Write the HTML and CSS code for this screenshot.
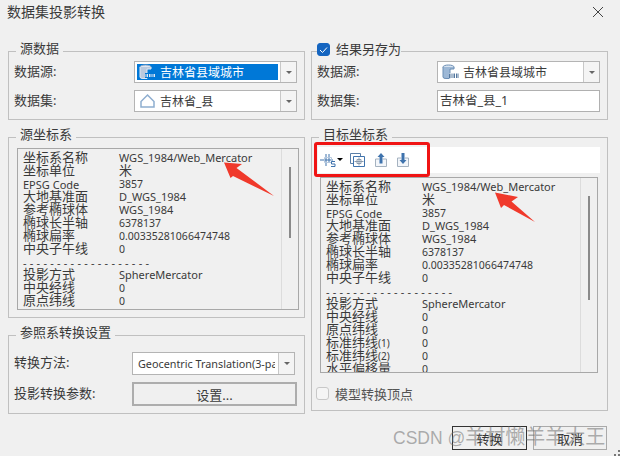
FILE: index.html
```html
<!DOCTYPE html>
<html lang="zh">
<head>
<meta charset="utf-8">
<title>数据集投影转换</title>
<link rel="stylesheet" href="styles.css">
</head>
<body>
<div class="dialog">
  <header class="titlebar">
    <span class="title">数据集投影转换</span>
    <svg class="close" width="12" height="12" viewBox="0 0 12 12"><path d="M1 1l10 10M11 1L1 11" stroke="#444" stroke-width="1" fill="none"/></svg>
  </header>

  <main class="columns">
    <section class="col">
      <fieldset class="group">
        <legend>源数据</legend>
        <div class="form-row">
          <label class="lbl">数据源:</label>
          <div class="combo">
            <div class="combo-value selected">
              <svg class="ico" width="17" height="16" viewBox="0 0 17 16"><ellipse cx="6.500" cy="3" rx="5.500" ry="2" fill="#dfe7f2" stroke="#8fa6c4"/><path d="M1 3v10q0 1.500 3 1.500h4V5h4V3" fill="#b9c9de" stroke="#dfe7f2"/><path d="M6 9h11v5H6z" fill="#0078d7"/><path d="M7 10v3M8.500 10v3M10.500 10v3M12 10v3M14 10v3M15.500 10v3" stroke="#dfe7f2"/></svg>
              <span>吉林省县域城市</span>
            </div>
            <div class="combo-btn"><i class="caret"></i></div>
          </div>
        </div>
        <div class="form-row">
          <label class="lbl">数据集:</label>
          <div class="combo">
            <div class="combo-value">
              <svg class="ico" width="17" height="16" viewBox="0 0 17 16"><path d="M8.500 2L15 8.500V14H2V8.500z" fill="#fff" stroke="#8eaed0" stroke-width="1.500"/></svg>
              <span>吉林省_县</span>
            </div>
            <div class="combo-btn"><i class="caret"></i></div>
          </div>
        </div>
      </fieldset>

      <fieldset class="group">
        <legend>源坐标系</legend>
        <div class="crs crs-source">
          <div class="crs-rows">
            <div class="row"><span class="k">坐标系名称</span><span class="v">WGS_1984/Web_Mercator</span></div>
            <div class="row"><span class="k">坐标单位</span><span class="v cjk">米</span></div>
            <div class="row"><span class="k code">EPSG Code</span><span class="v num">3857</span></div>
            <div class="row"><span class="k">大地基准面</span><span class="v">D_WGS_1984</span></div>
            <div class="row"><span class="k">参考椭球体</span><span class="v">WGS_1984</span></div>
            <div class="row"><span class="k">椭球长半轴</span><span class="v num">6378137</span></div>
            <div class="row"><span class="k">椭球扁率</span><span class="v num">0.00335281066474748</span></div>
            <div class="row"><span class="k">中央子午线</span><span class="v num">0</span></div>
            <div class="row dash">- - - - - - - - - - - - - - - - - - -</div>
            <div class="row"><span class="k">投影方式</span><span class="v">SphereMercator</span></div>
            <div class="row"><span class="k">中央经线</span><span class="v num">0</span></div>
            <div class="row"><span class="k">原点纬线</span><span class="v num">0</span></div>
          </div>
          <div class="scroll"><div class="thumb"></div></div>
        </div>
      </fieldset>

      <fieldset class="group">
        <legend>参照系转换设置</legend>
        <div class="form-row method">
          <label class="lbl">转换方法:</label>
          <div class="combo narrow">
            <div class="combo-value latin"><span class="clip">Geocentric Translation(3-parameter)</span></div>
            <div class="combo-btn"><i class="caret"></i></div>
          </div>
        </div>
        <div class="form-row params">
          <label class="lbl">投影转换参数:</label>
          <button class="btn-setting">设置...</button>
        </div>
      </fieldset>
    </section>

    <section class="col">
      <fieldset class="group">
        <legend class="check-legend"><span class="check on"><svg width="9" height="8" viewBox="0 0 9 8"><path d="M1 4l2.500 2.500L8 1.500" stroke="#fff" stroke-width="1" fill="none"/></svg></span><span class="check-text">结果另存为</span></legend>
        <div class="form-row">
          <label class="lbl">数据源:</label>
          <div class="combo">
            <div class="combo-value">
              <svg class="ico" width="17" height="16" viewBox="0 0 17 16"><ellipse cx="6.500" cy="3" rx="5.500" ry="2" fill="#d7e3f0" stroke="#6d8fb5"/><path d="M1 3v10q0 1.500 3 1.500h4V5h4V3" fill="#9db8d6" stroke="#6d8fb5"/><path d="M7 9h10v5.500H7z" fill="#fff"/><path d="M7.500 9.500v4.500M9 9.500v4.500M11 9.500v4.500M12.500 9.500v4.500M14.500 9.500v4.500M16 9.500v4.500" stroke="#55789f"/></svg>
              <span>吉林省县域城市</span>
            </div>
            <div class="combo-btn"><i class="caret"></i></div>
          </div>
        </div>
        <div class="form-row">
          <label class="lbl">数据集:</label>
          <div class="input">吉林省_县_1</div>
        </div>
      </fieldset>

      <fieldset class="group">
        <legend>目标坐标系</legend>
        <div class="toolbar">
          <svg class="tool-crs" width="23" height="16" viewBox="0 0 23 16"><path d="M0 8h13M6 2v12M9 2v9" stroke="#3f73ad" stroke-width="1" fill="none"/><path d="M4.500 5.500h7v5h-7z" fill="none" stroke="#b5c8de"/><path d="M15 9.500h-3.500v2.500H15v2.500h-4" stroke="#3f73ad" fill="none"/><path d="M17 6h6l-3 3z" fill="#000"/></svg>
          <svg width="15" height="14" viewBox="0 0 15 14"><path d="M.5.500h10v10H.5z" fill="none" stroke="#5b7fa8"/><path d="M3.500 3.500h11v10h-11z" fill="#fff" stroke="#3f73ad"/><path d="M4.500 8.500h9M9 4.500v8M7 6.500h4v4H7z" stroke="#8a9bae" fill="none"/></svg>
          <svg width="12" height="14" viewBox="0 0 12 14"><path d="M.5 6v7.500h11V6H8M4 6H.5" fill="#f3f6fa" stroke="#a5b2c0"/><path d="M6 0L2.500 4H4.500v6.500h3V4h2z" fill="#3f73ad"/></svg>
          <svg width="12" height="14" viewBox="0 0 12 14"><path d="M.5 5v8.500h11V5H8M4 5H.5" fill="#f3f6fa" stroke="#a5b2c0"/><path d="M6 11L2.500 7H4.500V0h3v7h2z" fill="#3f73ad"/></svg>
        </div>
        <div class="crs crs-target">
          <div class="crs-rows">
            <div class="row"><span class="k">坐标系名称</span><span class="v">WGS_1984/Web_Mercator</span></div>
            <div class="row"><span class="k">坐标单位</span><span class="v cjk">米</span></div>
            <div class="row"><span class="k code">EPSG Code</span><span class="v num">3857</span></div>
            <div class="row"><span class="k">大地基准面</span><span class="v">D_WGS_1984</span></div>
            <div class="row"><span class="k">参考椭球体</span><span class="v">WGS_1984</span></div>
            <div class="row"><span class="k">椭球长半轴</span><span class="v num">6378137</span></div>
            <div class="row"><span class="k">椭球扁率</span><span class="v num">0.00335281066474748</span></div>
            <div class="row"><span class="k">中央子午线</span><span class="v num">0</span></div>
            <div class="row dash">- - - - - - - - - - - - - - - - - - -</div>
            <div class="row"><span class="k">投影方式</span><span class="v">SphereMercator</span></div>
            <div class="row"><span class="k">中央经线</span><span class="v num">0</span></div>
            <div class="row"><span class="k">原点纬线</span><span class="v num">0</span></div>
            <div class="row"><span class="k">标准纬线<small>(1)</small></span><span class="v num">0</span></div>
            <div class="row"><span class="k">标准纬线<small>(2)</small></span><span class="v num">0</span></div>
            <div class="row"><span class="k">水平偏移量</span><span class="v num">0</span></div>
          </div>
          <div class="scroll"><div class="thumb"></div></div>
        </div>
        <div class="check-row"><span class="check"></span>模型转换顶点</div>
      </fieldset>
    </section>
  </main>

  <footer class="footer">
    <button class="btn primary">转换</button>
    <button class="btn">取消</button>
  </footer>

  <svg class="annot" width="620" height="456" viewBox="0 0 620 456">
    <path d="M224 162.500L242 164L236.500 168L274 196L233 176L230.500 178z" fill="#f0392b"/>
    <path d="M495 192.500L518 197L511.500 201.500L535 222L504 205L501 208z" fill="#f0392b"/>
  </svg>
  <div class="redbox"></div>
  <div class="watermark"><span class="wm-latin">CSDN @</span>羊村懒羊羊大王</div>
  <svg class="grip" width="6" height="6" viewBox="0 0 6 6"><path d="M4 0h2v2H4zM0 4h2v2H0zM4 4h2v2H4z" fill="#777"/></svg>
</div>
</body>
</html>
```
FILE: styles.css
```css
* { box-sizing: border-box; }
html, body { margin: 0; padding: 0; }
body {
  width: 620px;
  height: 456px;
  overflow: hidden;
  background: #f0f0f0;
  color: #3a3a3a;
  font-family: "Noto Sans", "Noto Sans CJK SC", sans-serif;
  font-size: 13px;
}
.dialog { position: relative; width: 620px; height: 456px; }
.titlebar {
  height: 24px;
  padding: 0 16px 0 7px;
  display: flex;
  align-items: center;
  justify-content: space-between;
}
.title { font-size: 14px; line-height: 24px; }
.columns {
  display: flex;
  gap: 6px;
  padding: 19px 12px 0 8px;
}
.col { width: 297px; display: flex; flex-direction: column; gap: 9px; flex: none; }
.group {
  margin: 0;
  min-width: 0;
  padding: 2px 7px 7px 5px;
  border: 1px solid #c0c0c0;
}
.group legend {
  margin-left: 2px;
  padding: 0 4px;
  font-size: 13px;
  line-height: 10px;
  height: 16px;
}
.form-row {
  display: flex;
  align-items: center;
  justify-content: space-between;
  height: 22px;
}
.form-row + .form-row { margin-top: 7px; }
.lbl { line-height: 18px; margin-bottom: 3px; }
.combo {
  display: flex;
  width: 163px;
  height: 22px;
  background: #fff;
  border: 1px solid #b4b4b4;
  flex: none;
}
.combo-value {
  flex: 1;
  min-width: 0;
  display: flex;
  align-items: center;
  gap: 4px;
  margin: 2px;
  padding-left: 2px;
  overflow: hidden;
  white-space: nowrap;
  font-size: 12px;
}
.combo-value.selected { background: #0078d7; color: #fff; }
.ico { flex: none; }
.combo-btn {
  width: 16px;
  flex: none;
  display: flex;
  align-items: center;
  justify-content: center;
  background: #f4f4f4;
  border-left: 1px solid #c8c8c8;
}
.caret {
  width: 0;
  height: 0;
  border-left: 3px solid transparent;
  border-right: 3px solid transparent;
  border-top: 3px solid #666;
}
.input {
  width: 163px;
  height: 22px;
  padding-left: 2px;
  background: #fff;
  border: 1px solid #b0b0b0;
  font-size: 12.500px;
  line-height: 19px;
}
.crs {
  display: flex;
  margin: 1px 0 0 3px;
  border: 1px solid #a8a8a8;
  overflow: hidden;
}
.crs-source { width: 282px; height: 162px; }
.crs-target { width: 278px; height: 196px; margin-top: 4px; }
.crs-rows {
  flex: 1;
  min-width: 0;
  padding: 2px 0 0 5px;
}
.row {
  display: flex;
  height: 13px;
  line-height: 13px;
  white-space: nowrap;
}
.k { width: 96px; flex: none; }
.k small { font-size: 10px; }
.k.code { font-size: 11px; line-height: 15px; }
.v { font-size: 11px; }
.v.num { font-size: 10.500px; line-height: 15px; }
.v.cjk { font-size: 13px; }
.dash { font-size: 11px; line-height: 15px; letter-spacing: 0.2px; }
.scroll {
  width: 17px;
  flex: none;
  padding: 18px 0 0 7px;
  border-left: 1px solid #dcdcdc;
}
.thumb { width: 2px; height: 71px; background: #8a8a8a; }
.crs-target .thumb { height: 104px; }
.method { margin-top: 7px; height: 23px; padding-right: 2px; }
.narrow { height: 23px; }
.latin { padding-left: 3px; margin-right: 3px; }
.clip { font-size: 10.800px; overflow: hidden; }
.params { height: 24px; margin-top: 6px; }
.btn-setting {
  width: 165px;
  height: 24px;
  padding: 0;
  flex: none;
  background: #f0f0f0;
  border: 2px solid #adadad;
  color: #3a3a3a;
  font: inherit;
}
.toolbar {
  display: flex;
  align-items: center;
  gap: 10px;
  height: 26px;
  margin-left: 1px;
  padding-left: 2px;
  background: #fff;
}
.tool-crs { margin-right: -3px; }
.check {
  display: inline-flex;
  align-items: center;
  justify-content: center;
  width: 13px;
  height: 13px;
  flex: none;
  border: 1px solid #c8c8c8;
  border-radius: 3px;
  background: #f5f5f5;
}
.check.on { background: #1565c0; border-color: #1565c0; }
.group .check-legend {
  display: flex;
  align-items: flex-start;
  gap: 6px;
  margin-left: 0;
  padding: 0;
  line-height: 13px;
}
.check-text { background: #f0f0f0; }
.check-row {
  display: flex;
  align-items: center;
  gap: 6px;
  height: 16px;
  margin: 12px 0 2px -1px;
  color: #555;
}
.footer {
  display: flex;
  justify-content: flex-end;
  gap: 6px;
  padding: 12px 13px 0 0;
}
.btn {
  width: 74px;
  height: 24px;
  padding: 0;
  background: #f0f0f0;
  border: 1px solid #aaa;
  color: #333;
  font: inherit;
}
.btn.primary { border-color: #333; width: 75px; }
.annot { position: absolute; left: 0; top: 0; pointer-events: none; }
.redbox {
  position: absolute;
  left: 314px;
  top: 142px;
  width: 116px;
  height: 35px;
  border: 3px solid #f01414;
  border-radius: 3px;
}
.watermark {
  position: absolute;
  left: 393px;
  top: 423px;
  font-size: 20px;
  line-height: 28px;
  color: rgba(110, 110, 110, 0.55);
  white-space: nowrap;
}
.wm-latin { font-family: "Liberation Sans", sans-serif; font-size: 17.500px; }
.grip { position: absolute; right: 0; bottom: 0; }
```
